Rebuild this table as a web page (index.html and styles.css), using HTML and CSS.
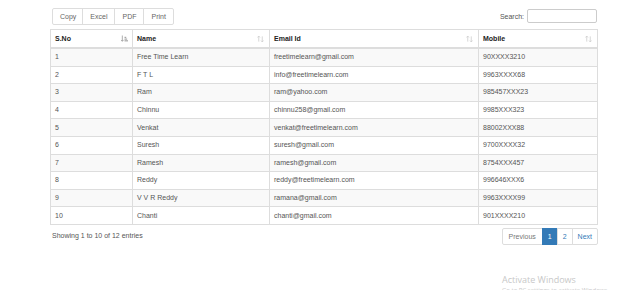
FILE: index.html
```html
<!DOCTYPE html>
<html lang="en">
<head>
  <meta charset="UTF-8">
  <title>Students</title>
  <link rel="stylesheet" href="styles.css">
</head>
<body>
  <div class="wrapper">
    <div class="top-bar">
      <div class="btn-group">
        <button class="btn">Copy</button>
        <button class="btn">Excel</button>
        <button class="btn">PDF</button>
        <button class="btn">Print</button>
      </div>
      <label class="search">Search: <input type="text"></label>
    </div>

    <table class="data-table">
      <thead>
        <tr>
          <th class="col-no">S.No
            <svg class="sort sorted" viewBox="0 0 8 8"><path d="M1.5 0v6.5M0 5l1.5 1.6L3 5" fill="none" stroke="currentColor" stroke-width="0.9"/><rect x="4" y="5.5" width="4" height="1.2"/><rect x="4" y="3.5" width="3" height="1.2"/><rect x="4" y="1.5" width="2" height="1.2"/></svg>
          </th>
          <th class="col-name">Name
            <svg class="sort" viewBox="0 0 8 8"><path d="M2 7V0.8M0.6 2.2L2 0.6l1.4 1.6M6 1v6.2M4.6 5.8L6 7.4l1.4-1.6" fill="none" stroke="currentColor" stroke-width="0.9"/></svg>
          </th>
          <th class="col-email">Email Id
            <svg class="sort" viewBox="0 0 8 8"><path d="M2 7V0.8M0.6 2.2L2 0.6l1.4 1.6M6 1v6.2M4.6 5.8L6 7.4l1.4-1.6" fill="none" stroke="currentColor" stroke-width="0.9"/></svg>
          </th>
          <th class="col-mobile">Mobile
            <svg class="sort" viewBox="0 0 8 8"><path d="M2 7V0.8M0.6 2.2L2 0.6l1.4 1.6M6 1v6.2M4.6 5.8L6 7.4l1.4-1.6" fill="none" stroke="currentColor" stroke-width="0.9"/></svg>
          </th>
        </tr>
      </thead>
      <tbody>
        <tr><td>1</td><td>Free Time Learn</td><td>freetimelearn@gmail.com</td><td>90XXXX3210</td></tr>
        <tr><td>2</td><td>F T L</td><td>info@freetimelearn.com</td><td>9963XXXX68</td></tr>
        <tr><td>3</td><td>Ram</td><td>ram@yahoo.com</td><td>985457XXX23</td></tr>
        <tr><td>4</td><td>Chinnu</td><td>chinnu258@gmail.com</td><td>9985XXX323</td></tr>
        <tr><td>5</td><td>Venkat</td><td>venkat@freetimelearn.com</td><td>88002XXX88</td></tr>
        <tr><td>6</td><td>Suresh</td><td>suresh@gmail.com</td><td>9700XXXX32</td></tr>
        <tr><td>7</td><td>Ramesh</td><td>ramesh@gmail.com</td><td>8754XXX457</td></tr>
        <tr><td>8</td><td>Reddy</td><td>reddy@freetimelearn.com</td><td>996646XXX6</td></tr>
        <tr><td>9</td><td>V V R Reddy</td><td>ramana@gmail.com</td><td>9963XXXX99</td></tr>
        <tr><td>10</td><td>Chanti</td><td>chanti@gmail.com</td><td>901XXXX210</td></tr>
      </tbody>
    </table>

    <div class="bottom-bar">
      <div class="info">Showing 1 to 10 of 12 entries</div>
      <ul class="pagination">
        <li class="disabled"><a href="#">Previous</a></li>
        <li class="active"><a href="#">1</a></li>
        <li><a href="#">2</a></li>
        <li><a href="#">Next</a></li>
      </ul>
    </div>
  </div>

  <div class="watermark">
    <p class="wm-title">Activate Windows</p>
    <p class="wm-sub">Go to PC settings to activate Windows.</p>
  </div>
</body>
</html>
```

FILE: styles.css
```css
body {
  margin: 0;
  font-family: "Liberation Sans", Arial, sans-serif;
  font-size: 7px;
  color: #555;
  background: #fff;
  overflow: hidden;
}

.wrapper {
  width: 548px;
  margin-left: 50px;
  padding-top: 8px;
}

.top-bar {
  display: flex;
  justify-content: space-between;
  align-items: flex-start;
  margin-bottom: 4px;
}

.btn-group {
  display: flex;
  margin-left: 2px;
}

.btn {
  font-family: inherit;
  font-size: 7px;
  color: #666;
  background: #fff;
  border: 1px solid #ddd;
  margin-left: -1px;
  padding: 0 7px;
  height: 17px;
  line-height: 15px;
}

.btn:first-child {
  margin-left: 0;
  border-radius: 2px 0 0 2px;
  padding: 0 6px 0 7px;
}

.btn:last-child {
  border-radius: 0 2px 2px 0;
}

.search {
  display: flex;
  align-items: center;
  gap: 3px;
  color: #555;
  margin-right: 1px;
  margin-top: 1px;
}

.search input {
  width: 66px;
  height: 12px;
  border: 1px solid #ccc;
  border-radius: 2px;
  padding: 0 1px;
  margin: 0;
}

.data-table {
  width: 100%;
  border-collapse: collapse;
  border: 1px solid #ddd;
}

.data-table th,
.data-table td {
  border: 1px solid #ddd;
  text-align: left;
  padding: 3.3px 4px;
  line-height: 10px;
  white-space: nowrap;
}

.data-table th {
  position: relative;
  font-weight: bold;
  color: #222;
  border-bottom: 2px solid #ddd;
  padding: 3.5px 4px;
}

.data-table tbody tr:nth-child(odd) {
  background: #f9f9f9;
}

.col-no { width: 73px; }
.col-name { width: 128px; }
.col-email { width: 200px; }

.sort {
  position: absolute;
  right: 5px;
  top: 5px;
  width: 7px;
  height: 8px;
  color: #ccc;
  fill: #ccc;
}

.sort.sorted {
  color: #999;
  fill: #999;
  right: 4px;
}

.bottom-bar {
  display: flex;
  justify-content: space-between;
  align-items: flex-start;
  margin-top: 3px;
}

.info {
  padding-top: 4px;
  margin-left: 2px;
}

.pagination {
  display: flex;
  list-style: none;
  margin: 0;
  padding: 0;
}

.pagination a {
  display: block;
  height: 15px;
  line-height: 15px;
  padding: 0 5px;
  border: 1px solid #ddd;
  margin-left: -1px;
  color: #337ab7;
  text-decoration: none;
  background: #fff;
}

.pagination li:first-child a {
  border-radius: 2px 0 0 2px;
  padding: 0 6px;
}

.pagination li:last-child a {
  border-radius: 0 2px 2px 0;
}

.pagination .disabled a {
  color: #777;
}

.pagination .active a {
  background: #337ab7;
  border-color: #337ab7;
  color: #fff;
}

.watermark {
  position: absolute;
  left: 502px;
  top: 273px;
  color: #c8c8c8;
  font-family: "Open Sans", "Noto Sans", sans-serif;
}

.wm-title {
  margin: 0;
  font-size: 9px;
}

.wm-sub {
  margin: 0;
  font-size: 6px;
}
```
